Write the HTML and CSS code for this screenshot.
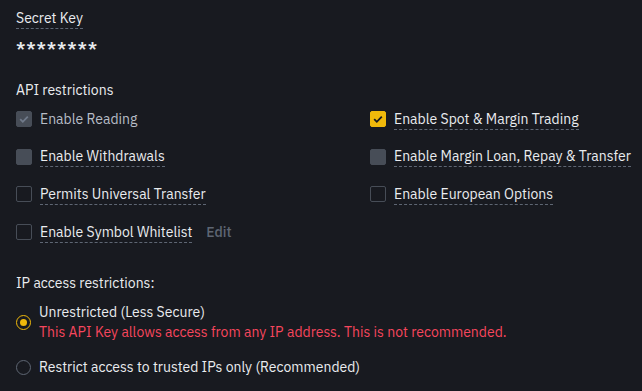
FILE: index.html
```html
<!DOCTYPE html>
<html>
<head>
<meta charset="utf-8">
<link rel="stylesheet" href="styles.css">
</head>
<body>
<div class="page">
  <div class="field">
    <span class="field-label dashed">Secret Key</span>
  </div>
  <div class="field-value">********</div>

  <div class="section-title">API restrictions</div>
  <div class="perm-grid">
    <div class="perm"><span class="box box-disabled-checked"><svg viewBox="0 0 16 16" width="16" height="16"><path d="M4.2 8.2l2.6 2.6 5-5.2" fill="none" stroke="#707a8a" stroke-width="1.8"/></svg></span><span class="perm-label dim">Enable Reading</span></div>
    <div class="perm"><span class="box box-checked"><svg viewBox="0 0 16 16" width="16" height="16"><path d="M4.2 8.2l2.6 2.6 5-5.2" fill="none" stroke="#181a20" stroke-width="1.8"/></svg></span><span class="perm-label dashed">Enable Spot &amp; Margin Trading</span></div>
    <div class="perm"><span class="box box-disabled"></span><span class="perm-label dashed">Enable Withdrawals</span></div>
    <div class="perm"><span class="box box-disabled"></span><span class="perm-label dashed">Enable Margin Loan, Repay &amp; Transfer</span></div>
    <div class="perm"><span class="box"></span><span class="perm-label dashed">Permits Universal Transfer</span></div>
    <div class="perm"><span class="box"></span><span class="perm-label dashed">Enable European Options</span></div>
    <div class="perm"><span class="box"></span><span class="perm-label dashed">Enable Symbol Whitelist</span><span class="edit">Edit</span></div>
  </div>

  <div class="section-title ip-title">IP access restrictions:</div>
  <div class="radio-row first">
    <span class="radio radio-on"><span class="dot"></span></span>
    <div class="radio-text">
      <div class="radio-label">Unrestricted (Less Secure)</div>
      <div class="warn">This API Key allows access from any IP address. This is not recommended.</div>
    </div>
  </div>
  <div class="radio-row second">
    <span class="radio"></span>
    <div class="radio-text">
      <div class="radio-label">Restrict access to trusted IPs only (Recommended)</div>
    </div>
  </div>
</div>
</body>
</html>
```

FILE: styles.css
```css
html, body {
  margin: 0;
  padding: 0;
  background: #181a20;
  width: 642px;
  height: 391px;
  overflow: hidden;
}
.page {
  padding: 8px 16px 0 16px;
  font-family: "IBM Plex Sans", "Inter", "Roboto", "Noto Sans", sans-serif;
  font-size: 14px;
  color: #eaecef;
  white-space: nowrap;
}
.field {
  display: flex;
  line-height: 20px;
}
.dashed {
  border-bottom: 1px dashed #5e6673;
}
.field-value {
  margin-top: 9px;
  font-size: 17px;
  line-height: 20px;
  font-weight: 600;
  letter-spacing: 0.8px;
}
.section-title {
  margin-top: 22px;
  line-height: 20px;
}
.perm-grid {
  margin-top: 8px;
  display: grid;
  grid-template-columns: 354px 1fr;
  grid-auto-rows: 22px;
  row-gap: 15.7px;
}
.perm {
  display: flex;
  align-items: center;
  gap: 8px;
}
.box {
  width: 16px;
  height: 16px;
  box-sizing: border-box;
  border: 1px solid #474d57;
  border-radius: 2px;
  display: flex;
  flex: none;
}
.box-disabled {
  background: #474d57;
}
.box-disabled-checked {
  background: #474d57;
}
.box-checked {
  background: #f0b90b;
  border-color: #f0b90b;
}
.box svg {
  margin: -1px;
}
.perm-label {
  line-height: 20px;
  color: #eaecef;
}
.perm-label.dim {
  color: #b7bdc6;
}
.edit {
  margin-left: 6px;
  color: #5e6673;
  font-weight: 500;
  font-size: 14px;
}
.ip-title {
  margin-top: 30px;
}
.radio-row {
  display: flex;
  align-items: center;
  gap: 8px;
  line-height: 20px;
}
.radio-row.first {
  margin-top: 9px;
}
.radio-row.second {
  margin-top: 15px;
}
.radio {
  width: 15px;
  height: 15px;
  box-sizing: border-box;
  border: 1px solid #5e6673;
  border-radius: 50%;
  flex: none;
  display: flex;
  align-items: center;
  justify-content: center;
}
.radio-on {
  border: 1.5px solid #f0b90b;
}
.dot {
  width: 7px;
  height: 7px;
  border-radius: 50%;
  background: #f0b90b;
}
.warn {
  color: #f6465d;
}
```
